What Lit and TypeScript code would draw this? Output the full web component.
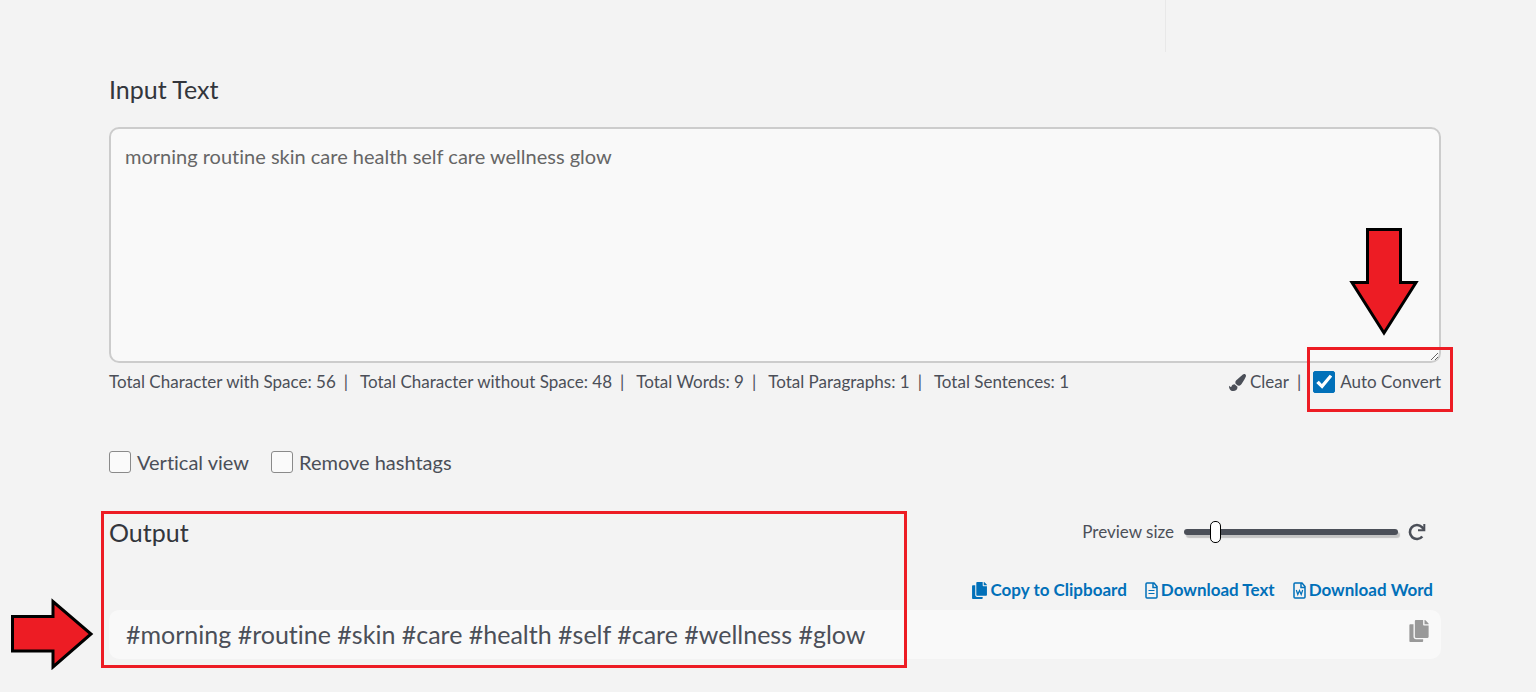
import { LitElement, html, css, svg } from "lit";
import { customElement, state } from "lit/decorators.js";

const copyShape = svg`<path d="M320 448v40c0 13.255-10.745 24-24 24H24c-13.255 0-24-10.745-24-24V120c0-13.255 10.745-24 24-24h72v296c0 30.879 25.121 56 56 56h168zm0-344V0H152c-13.255 0-24 10.745-24 24v368c0 13.255 10.745 24 24 24h272c13.255 0 24-10.745 24-24V128H344c-13.2 0-24-10.8-24-24zm120.971-31.029L375.029 7.029A24 24 0 0 0 358.059 0H352v96h96v-6.059a24 24 0 0 0-7.029-16.97z"/>`;
const brushShape = svg`<path d="M167.02 309.34c-40.12 2.58-76.53 17.86-97.19 72.3-2.35 6.21-8 9.98-14.59 9.98-11.11 0-45.46-27.67-55.25-34.35C0 439.62 37.93 512 128 512c75.86 0 128-43.77 128-120.19 0-3.11-.65-6.08-.97-9.13l-88.01-73.34zM457.89 0c-15.16 0-29.37 6.71-40.21 16.45C213.27 199.05 192 203.34 192 257.09c0 13.7 3.25 26.76 8.73 38.7l63.82 53.18c7.21 1.8 14.64 3.03 22.39 3.03 62.11 0 98.11-45.47 211.16-256.46 7.38-14.35 13.9-29.85 13.9-45.99C512 20.64 486 0 457.89 0z"/>`;
const pageOutline = svg`<path d="M2 1h7L12 4.500V15a1 1 0 0 1-1 1H2a1 1 0 0 1-1-1V2a1 1 0 0 1 1-1zM8 1v4.500h4"/>`;

@customElement("app-root")
export class AppRoot extends LitElement {
  static styles = css`
    :host {
      display: block;
      min-height: 100vh;
      background: #f3f3f3;
      color: #4b4f58;
      font-family: Lato, "Liberation Sans", sans-serif;
      font-size: 17px;
      font-variant-ligatures: none;
      line-height: 24px;
    }
    * {
      box-sizing: border-box;
    }
    .top {
      display: flex;
      justify-content: flex-end;
      height: 52px;
    }
    .aside {
      width: 371px;
      border-left: 1px solid #e8e8e8;
    }
    main {
      padding: 21px 95px 32px 109px;
    }
    h2 {
      margin: 0;
      font-size: 25px;
      line-height: 32px;
      font-weight: 400;
      color: #33363c;
    }
    .source {
      display: block;
      width: 100%;
      height: 236px;
      margin-top: 22px;
      padding: 14px;
      border: 2px solid #ccc;
      border-radius: 10px;
      background: #f9f9f9;
      color: #666;
      font: inherit;
      font-size: 20px;
      font-variant-ligatures: none;
      line-height: 26px;
      outline: none;
    }
    .row {
      display: flex;
      align-items: center;
      justify-content: space-between;
    }
    .info {
      margin-top: 7px;
    }
    .stats {
      display: flex;
      margin: 0;
      padding: 0;
      list-style: none;
    }
    .stats li + li::before,
    .bar {
      content: "|";
      margin: 0 12px 0 8px;
    }
    .tools,
    .auto,
    .clear,
    .checks,
    .checks label,
    .size,
    .links,
    .links a {
      display: flex;
      align-items: center;
    }
    button {
      padding: 0;
      border: 0;
      background: none;
      color: inherit;
      font: inherit;
      cursor: pointer;
    }
    svg {
      display: block;
      flex: none;
    }
    .solid {
      fill: currentColor;
    }
    .line {
      fill: none;
      stroke: currentColor;
    }
    .clear {
      gap: 4px;
    }
    .auto {
      position: relative;
      gap: 5px;
    }
    .tick {
      appearance: none;
      display: grid;
      place-items: center;
      width: 22px;
      height: 22px;
      margin: 0;
      border: 1px solid #8a8a8a;
      border-radius: 3px;
      background: #fafafa;
    }
    .tick:checked {
      border-color: #0170b9;
      border-radius: 2px;
      background: #0170b9;
    }
    .tick:checked::before {
      content: "";
      width: 16px;
      height: 16px;
      background: #fff;
      clip-path: polygon(0 56%, 16% 42%, 35% 62%, 84% 4%, 100% 16%, 37% 92%);
    }
    .checks {
      gap: 22px;
      margin-top: 56px;
      font-size: 20px;
    }
    .checks label {
      gap: 6px;
    }
    .heading {
      margin-top: 42px;
    }
    .size {
      gap: 10px;
      padding-right: 15px;
    }
    .slider {
      appearance: none;
      width: 214px;
      height: 6px;
      margin: 0;
      border-radius: 3px;
      background: #4b4f58;
      box-shadow: 2px 3px 1px #c4c4c4;
    }
    .slider::-webkit-slider-thumb {
      appearance: none;
      width: 11px;
      height: 22px;
      border: 1px solid #000;
      border-radius: 5px;
      background: #fff;
    }
    .links {
      justify-content: flex-end;
      gap: 18px;
      margin-top: 30px;
      padding-right: 8px;
      font-weight: 700;
    }
    .links a {
      gap: 3px;
      color: #0170b9;
      text-decoration: none;
    }
    .result {
      display: flex;
      align-items: flex-start;
      justify-content: space-between;
      margin-top: 8px;
      padding: 8px 12px 9px 17px;
      border-radius: 10px;
      background: #f9f9f9;
      font-size: 25px;
      line-height: 32px;
    }
    .copy {
      padding-top: 2px;
      color: #999;
    }
    .output {
      position: relative;
    }
    .mark {
      position: absolute;
      border: 3px solid #ed1c24;
      pointer-events: none;
    }
    .mark-auto {
      inset: -23px -12px -18px -6px;
    }
    .mark-output {
      top: -5px;
      bottom: -9px;
      left: -8px;
      width: 806px;
    }
    .arrow {
      position: absolute;
      fill: #ed1c24;
      stroke: #000;
      stroke-width: 3;
      pointer-events: none;
    }
    .arrow-down {
      right: 22px;
      bottom: 58px;
    }
    .arrow-right {
      left: -100px;
      bottom: -11px;
    }
  `;

  @state() private text = "morning routine skin care health self care wellness glow";

  private onInput(e: Event) {
    this.text = (e.target as HTMLTextAreaElement).value;
  }

  private get stats(): string[] {
    const words = this.text.split(/\s+/).filter(Boolean).length;
    return [
      `Total Character with Space: ${this.text.length}`,
      `Total Character without Space: ${this.text.replace(/\s/g, "").length}`,
      `Total Words: ${words}`,
      "Total Paragraphs: 1",
      "Total Sentences: 1",
    ];
  }

  render() {
    const tags = this.text.split(/\s+/).filter(Boolean).map((w) => `#${w}`).join(" ");
    return html`
      <div class="top"><div class="aside"></div></div>
      <main>
        <h2><label for="source">Input Text</label></h2>
        <textarea id="source" class="source" spellcheck="false" .value=${this.text} @input=${this.onInput}></textarea>
        <div class="row info">
          <ul class="stats">${this.stats.map((s) => html`<li>${s}</li>`)}</ul>
          <div class="tools">
            <button class="clear" @click=${() => (this.text = "")}>
              <svg class="solid" width="17" height="17" viewBox="0 0 512 512">${brushShape}</svg>Clear
            </button>
            <span class="bar">|</span>
            <label class="auto">
              <input class="tick" type="checkbox" checked />Auto Convert
              <span class="mark mark-auto"></span>
              <svg class="arrow arrow-down" width="70" height="110" viewBox="0 0 70 110">
                <path d="M18.500 3.500h33v53H67L35 107 3 56.500h15.500z" />
              </svg>
            </label>
          </div>
        </div>
        <div class="checks">
          <label><input class="tick" type="checkbox" />Vertical view</label>
          <label><input class="tick" type="checkbox" />Remove hashtags</label>
        </div>
        <section class="output heading">
          <div class="row">
            <h2>Output</h2>
            <div class="size">
              <label for="size">Preview size</label>
              <input id="size" class="slider" type="range" min="0" max="100" value="13" />
              <button aria-label="Reset preview size">
                <svg class="line" width="18" height="18" viewBox="0 0 18 18" stroke-width="2.600">
                  <path d="M14.300 13.500A7 7 0 1 1 14 4.200L16 6.500" />
                  <path d="M16.300 1v6.200H10" stroke-width="2" />
                </svg>
              </button>
            </div>
          </div>
          <nav class="links">
            <a href="#copy"><svg class="solid" width="15" height="17" viewBox="0 0 448 512">${copyShape}</svg>Copy to Clipboard</a>
            <a href="#text"><svg class="line" width="13" height="17" viewBox="0 0 13 17" stroke-width="1.500">${pageOutline}<path d="M3.500 8.500h6M3.500 11.500h6" stroke-width="1.200" /></svg>Download Text</a>
            <a href="#word"><svg class="line" width="13" height="17" viewBox="0 0 13 17" stroke-width="1.500">${pageOutline}<path d="M3.300 8l1.500 4.500L6.500 8.500l1.700 4L9.700 8" stroke-width="1.200" /></svg>Download Word</a>
          </nav>
          <div class="result">
            <output for="source">${tags}</output>
            <button class="copy" aria-label="Copy output">
              <svg class="solid" width="20" height="22" viewBox="0 0 448 512">${copyShape}</svg>
            </button>
          </div>
          <span class="mark mark-output"></span>
          <svg class="arrow arrow-right" width="86" height="72" viewBox="0 0 86 72">
            <path d="M3.500 18.500H44V3.500L82 36 44 69V53H3.500z" />
          </svg>
        </section>
      </main>
    `;
  }
}
